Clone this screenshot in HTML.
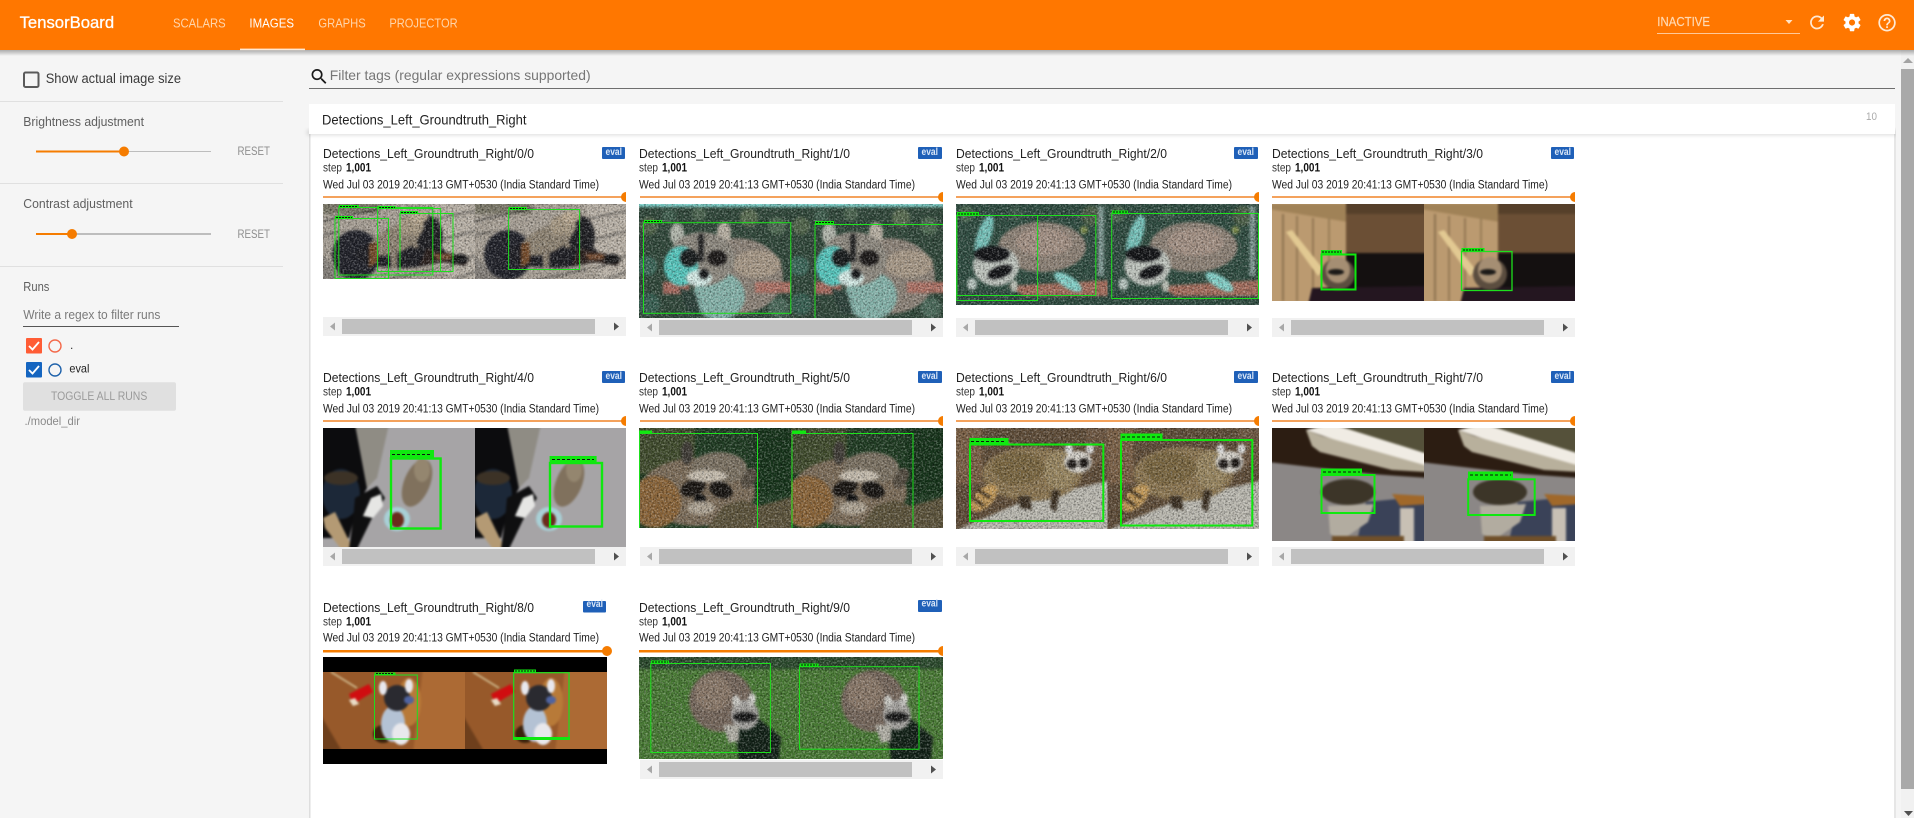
<!DOCTYPE html>
<html><head><meta charset="utf-8"><title>TensorBoard</title>
<style>
html,body{margin:0;padding:0;background:#f5f5f5;overflow:hidden}
svg{display:block}
text{font-family:"Liberation Sans",sans-serif;white-space:pre}
.nav{font-size:13px;fill:#ffd5ab}
.t{font-size:13px;fill:#212121}
.s{font-size:11.5px;fill:#333}
.sb{font-size:11.5px;fill:#111;font-weight:700}
.d{font-size:11.5px;fill:#212121}
.e{font-size:10.5px;fill:#d9e6f7;font-weight:700}
.g{font-size:12.5px;fill:#5f5f5f}
.r{font-size:12px;fill:#8e8e8e}
.bx{fill:none;stroke:#1de01d;stroke-width:1}
.bt{fill:none;stroke:#0fe80f;stroke-width:2}
.lb{fill:#10e810}
.ld{stroke:#111;stroke-width:1;stroke-dasharray:2 1}
</style></head>
<body>
<svg xmlns="http://www.w3.org/2000/svg" width="1914" height="818" viewBox="0 0 1914 818">
<defs>
<filter id="b" x="-5%" y="-5%" width="110%" height="110%" color-interpolation-filters="sRGB"><feGaussianBlur stdDeviation="1"/></filter>
<filter id="f" x="-5%" y="-5%" width="110%" height="110%" color-interpolation-filters="sRGB">
<feGaussianBlur stdDeviation="1.2" result="a"/>
<feTurbulence type="fractalNoise" baseFrequency=".55" numOctaves="2" seed="4" result="n"/>
<feColorMatrix in="n" values="0 0 0 0 0 0 0 0 0 0 0 0 0 0 0 1.1 0 0 0 -.46" result="dk"/>
<feColorMatrix in="n" values="0 0 0 0 1 0 0 0 0 1 0 0 0 0 1 0 .9 0 0 -.4" result="lt"/>
<feMerge><feMergeNode in="a"/><feMergeNode in="dk"/><feMergeNode in="lt"/></feMerge>
</filter>
<filter id="sh" x="-5%" y="-50%" width="110%" height="250%"><feGaussianBlur stdDeviation="2"/></filter>
<linearGradient id="hs" x1="0" y1="0" x2="0" y2="1"><stop offset="0" stop-color="#000" stop-opacity=".3"/><stop offset="1" stop-color="#000" stop-opacity="0"/></linearGradient>

<g id="sl"><rect x="0" y="-.75" width="303" height="1.5" fill="#f08326"/><path d="M303-5A5 5 0 0 0 303 5Z" fill="#f57c00"/></g>
<g id="sc"><rect width="303" height="19" fill="#f1f1f1"/><rect x="19" y="2" width="253" height="15" fill="#c1c1c1"/><path d="M7 9.5L12 5.5V13.5Z" fill="#a8a8a8"/><path d="M291 5.5L296 9.5L291 13.5Z" fill="#505050"/></g>

<g id="p0" filter="url(#f)">
<rect x="-4" y="-4" width="160" height="84" fill="#aaa297"/>
<rect x="-4" y="-4" width="60" height="14" fill="#7b7868"/>
<path d="M110 0H156V80H125Z" fill="#bcb4a9"/>
<path d="M-4 48L28 80H-4Z" fill="#85807a"/>
<ellipse cx="33" cy="51" rx="24" ry="25" fill="#1f2028"/>
<ellipse cx="78" cy="50" rx="45" ry="14" fill="#1c1c22"/>
<ellipse cx="106" cy="33" rx="14" ry="21" fill="#1c1c20"/>
<path d="M104 44L132 50L146 56L142 62L120 58L96 62Z" fill="#2a1f1c"/>
<path d="M110 50L128 50L130 55L114 56Z" fill="#7a5034"/>
<ellipse cx="137" cy="55" rx="8" ry="5" fill="#141416"/>
<ellipse cx="72" cy="36" rx="27" ry="13" transform="rotate(-22 72 36)" fill="#8f8473"/>
<ellipse cx="88" cy="22" rx="13" ry="11" fill="#a89a84"/>
<ellipse cx="96" cy="13" rx="9" ry="6" fill="#bcab92"/>
<path d="M67 44L75 44L74 64L68 64ZM84 30L92 30L96 44L90 44Z" fill="#8a7f6f"/>
<path d="M46 40L54 38L55 58L46 64Z" fill="#754a28"/>
<path d="M-4 18L60 4M-4 32L16 28M108 16L156 6M118 36L156 26M122 64L156 50M62 76L112 65M130 76L156 66" stroke="#2a2a2a" stroke-width="1" fill="none"/>
</g>

<g id="p1" filter="url(#f)">
<rect x="-4" y="-4" width="160" height="122" fill="#2e4638"/>
<rect x="-4" y="-4" width="160" height="7" fill="#7fd6cf"/>
<circle cx="10" cy="22" r="9" fill="#50654a"/><circle cx="30" cy="12" r="7" fill="#3f5f4e"/><circle cx="110" cy="14" r="9" fill="#5a6e52"/><circle cx="138" cy="22" r="9" fill="#4e6a52"/><circle cx="60" cy="10" r="7" fill="#4c6650"/><circle cx="8" cy="62" r="10" fill="#3a6658"/><circle cx="10" cy="100" r="11" fill="#355e50"/><circle cx="140" cy="104" r="10" fill="#4a6a5a"/>
<ellipse cx="98" cy="72" rx="46" ry="38" fill="#8d8378"/>
<ellipse cx="118" cy="60" rx="24" ry="14" fill="#a99a88"/>
<ellipse cx="80" cy="92" rx="26" ry="24" fill="#86b5ac"/>
<rect x="24" y="78" width="26" height="12" fill="#a96a5e"/>
<rect x="116" y="78" width="38" height="11" fill="#b07265"/>
<ellipse cx="38" cy="30" rx="7" ry="11" fill="#b4b9ae"/><ellipse cx="85" cy="29" rx="7" ry="11" fill="#bcb4a6"/>
<ellipse cx="63" cy="55" rx="33" ry="27" fill="#8f8a80"/>
<ellipse cx="42" cy="62" rx="17" ry="20" fill="#56c8bf"/>
<ellipse cx="50" cy="54" rx="9" ry="9" fill="#15191a"/><ellipse cx="78" cy="54" rx="10" ry="8" fill="#1a1716"/>
<rect x="59" y="30" width="6" height="28" fill="#222"/>
<ellipse cx="60" cy="74" rx="13" ry="8" fill="#d8efea"/>
<ellipse cx="65" cy="70" rx="5" ry="5" fill="#101214"/>
<path d="M40 84L50 110H62L56 88Z" fill="#2a4038"/>
</g>

<g id="p2" filter="url(#f)">
<rect x="-4" y="-4" width="160" height="109" fill="#2c4a3e"/>
<circle cx="10" cy="10" r="8" fill="#4a6650"/><circle cx="135" cy="12" r="10" fill="#4a5e46"/><circle cx="118" cy="35" r="7" fill="#b2ae3e"/><circle cx="128" cy="26" r="4" fill="#7a8a4a"/><circle cx="60" cy="10" r="7" fill="#3c5a4a"/>
<rect x="142" y="2" width="6" height="70" fill="#7f9a94"/>
<path d="M52 82L156 76V92L68 92Z" fill="#a56d5c"/>
<ellipse cx="86" cy="43" rx="44" ry="25" fill="#8e8276"/>
<ellipse cx="88" cy="38" rx="28" ry="14" fill="#a59285"/>
<ellipse cx="28" cy="32" rx="7" ry="22" transform="rotate(18 28 32)" fill="#76c4bc"/>
<ellipse cx="112" cy="78" rx="16" ry="6" transform="rotate(32 112 78)" fill="#84d2ca"/>
<ellipse cx="40" cy="62" rx="23" ry="20" fill="#c0c6bf"/>
<ellipse cx="36" cy="50" rx="18" ry="8" fill="#111215"/>
<ellipse cx="44" cy="68" rx="13" ry="6" transform="rotate(-20 44 68)" fill="#101114"/>
<ellipse cx="16" cy="80" rx="5" ry="6" fill="#b8c6c0"/><ellipse cx="58" cy="82" rx="4" ry="6" fill="#b8bdb2"/>
</g>

<g id="p3" filter="url(#b)">
<rect x="-4" y="-4" width="160" height="105" fill="#bb9a70"/>
<path d="M-4 0H76V18L-4 5Z" fill="#a08257"/>
<rect x="10" y="10" width="2" height="87" fill="#8e7350"/><rect x="24" y="12" width="2" height="85" fill="#967a56"/><rect x="40" y="14" width="2" height="84" fill="#957954"/><rect x="56" y="14" width="2" height="84" fill="#9a7f58"/>
<rect x="74" y="-4" width="82" height="56" fill="#6b4f35"/>
<rect x="74" y="-4" width="82" height="14" fill="#56402a"/>
<rect x="74" y="49" width="82" height="52" fill="#141010"/>
<path d="M14 28L20 26L52 66L46 72Z" fill="#e2c992"/>
<path d="M40 84L156 82V101H36Z" fill="#241620"/>
<ellipse cx="66" cy="70" rx="17" ry="16" fill="#5b4d3f"/>
<ellipse cx="66" cy="66" rx="12" ry="13" fill="#a58e73"/><ellipse cx="64" cy="68" rx="8" ry="3" fill="#1c1a18"/>
</g>

<g id="p4" filter="url(#b)">
<rect x="-4" y="-4" width="160" height="127" fill="#a6a4a6"/>
<path d="M-4-4H32L44 60L34 78L26 110H-4Z" fill="#0c0c0e"/>
<path d="M32-4H66L54 50L44 60Z" fill="#8f8c84"/>
<ellipse cx="18" cy="66" rx="19" ry="25" fill="#1c2838"/>
<ellipse cx="18" cy="50" rx="17" ry="7" fill="#3c3226"/>
<path d="M0 90L12 84L30 121H18L2 100Z" fill="#b49a74"/>
<path d="M32 70L54 58L62 70L48 92L34 121H26L30 92Z" fill="#0f0f10"/>
<path d="M48 70L58 66L60 78L50 90L40 88Z" fill="#e6e6e4"/>
<ellipse cx="94" cy="55" rx="13" ry="25" transform="rotate(22 94 55)" fill="#80715d"/>
<ellipse cx="99" cy="42" rx="8" ry="12" fill="#94866f"/>
<ellipse cx="74" cy="91" rx="13" ry="12" fill="#a8d0d6"/><ellipse cx="74" cy="92" rx="7" ry="8" fill="#6a2c1c"/>
</g>

<g id="p5" filter="url(#f)">
<rect x="-4" y="-4" width="160" height="108" fill="#1d3a20"/>
<rect x="-4" y="-4" width="60" height="50" fill="#3e4a2a"/>
<rect x="115" y="-4" width="41" height="70" fill="#143218"/>
<ellipse cx="58" cy="64" rx="58" ry="34" fill="#7c6c58"/>
<ellipse cx="16" cy="74" rx="26" ry="26" fill="#8b6437"/>
<ellipse cx="48" cy="25" rx="6" ry="12" fill="#3e3a34"/>
<ellipse cx="110" cy="50" rx="7" ry="11" transform="rotate(30 110 50)" fill="#544c40"/>
<ellipse cx="80" cy="40" rx="28" ry="16" fill="#7c7262"/>
<ellipse cx="54" cy="60" rx="13" ry="8" fill="#17130f" transform="rotate(-20 54 60)"/>
<ellipse cx="82" cy="62" rx="12" ry="8" fill="#15120f" transform="rotate(20 82 62)"/>
<ellipse cx="68" cy="48" rx="20" ry="6" fill="#c8bfb0"/>
<ellipse cx="61" cy="71" rx="6" ry="5" fill="#0d0d0d"/>
<ellipse cx="62" cy="80" rx="14" ry="7" fill="#b0a594"/>
<path d="M66 104L84 78L104 72L120 78L156 68V104Z" fill="#5c533a"/>
</g>

<g id="p6" filter="url(#f)">
<rect x="-4" y="-4" width="160" height="109" fill="#5e4b36"/>
<rect x="-4" y="-4" width="30" height="60" fill="#7a5f44"/><rect x="130" y="-4" width="26" height="42" fill="#6d5640"/>
<path d="M-4 104L70 72L156 52V105H-4Z" fill="#bdbbb2"/>
<ellipse cx="76" cy="46" rx="50" ry="27" fill="#8c7650"/>
<ellipse cx="62" cy="40" rx="26" ry="16" fill="#7a663f"/>
<ellipse cx="104" cy="42" rx="16" ry="20" fill="#9a8760"/>
<ellipse cx="28" cy="70" rx="17" ry="9" transform="rotate(-45 28 70)" fill="#c49a58"/>
<path d="M22 62L34 70M17 70L28 78" stroke="#3a2c1a" stroke-width="3"/>
<ellipse cx="122" cy="34" rx="14" ry="11" fill="#d8d4cc"/>
<ellipse cx="116" cy="36" rx="5" ry="5" fill="#17120f"/><ellipse cx="128" cy="35" rx="5" ry="5" fill="#17120f"/>
<ellipse cx="113" cy="21" rx="4" ry="5" fill="#ddd"/><ellipse cx="134" cy="21" rx="4" ry="5" fill="#ddd"/>
<path d="M62 68L74 68L76 82L64 80ZM96 62L104 62L100 84L94 80Z" fill="#3a2e20"/>
</g>

<g id="p7" filter="url(#b)">
<rect x="-4" y="-4" width="160" height="121" fill="#8b8786"/>
<path d="M-4-4H156V50L100 46L-4 34Z" fill="#2c1d12"/>
<path d="M34-4H156V40Z" fill="#55513a"/>
<path d="M60-4L156 26V44L34 2Z" fill="#f0ece4"/>
<path d="M34 2L40 18L48 24L120 42L156 44V38L50 8Z" fill="#b8b09c"/>
<ellipse cx="76" cy="64" rx="27" ry="13" fill="#3c3528"/>
<path d="M94 74L156 68V117H84Z" fill="#3a4258"/>
<path d="M120 66L156 68V76L128 78Z" fill="#a0682a"/>
<rect x="128" y="80" width="14" height="35" fill="#c8c0b4"/>
<path d="M56 78L102 76L96 94L70 112L58 106Z" fill="#b2aca0"/>
<rect x="60" y="108" width="72" height="9" fill="#70502a"/>
</g>

<g id="p8" filter="url(#b)">
<rect x="-4" y="-4" width="150" height="85" fill="#97592a"/>
<path d="M100-4H146V81H90Z" fill="#ac6a34"/><path d="M-4 40L20 81H-4Z" fill="#6e3f1c"/>
<ellipse cx="86" cy="30" rx="12" ry="24" fill="#b87a38"/>
<path d="M8 0L34 16" stroke="#d8c69a" stroke-width="1.5"/>
<path d="M26 22L46 12L50 20L30 32Z" fill="#d00d10"/><path d="M26 28L30 34L36 32L32 26Z" fill="#e9dcc6"/>
<ellipse cx="60" cy="62" rx="10" ry="9" fill="#3a220c"/>
<ellipse cx="70" cy="52" rx="12" ry="18" fill="#b4c2d4"/><ellipse cx="78" cy="62" rx="9" ry="11" fill="#e8e8ec"/>
<ellipse cx="74" cy="26" rx="13" ry="13" fill="#2a2a30"/>
<ellipse cx="60" cy="16" rx="4" ry="7" fill="#e8e8ee"/><ellipse cx="86" cy="14" rx="4" ry="7" fill="#e8e8ee"/>
<ellipse cx="86" cy="28" rx="5" ry="4" fill="#5064a0"/>
</g>

<g id="p9" filter="url(#f)">
<rect x="-4" y="-4" width="164" height="110" fill="#477a32"/>
<rect x="-4" y="-4" width="164" height="16" fill="#28482a"/>
<path d="M96 72L118 60L142 80L140 104H100Z" fill="#0f1f14"/>
<ellipse cx="82" cy="44" rx="32" ry="31" fill="#75665a"/>
<ellipse cx="74" cy="36" rx="18" ry="18" fill="#8a7868"/>
<ellipse cx="106" cy="58" rx="14" ry="15" fill="#a6a4a0"/>
<ellipse cx="106" cy="60" rx="12" ry="5" fill="#141414"/>
<ellipse cx="97" cy="44" rx="4" ry="6" fill="#cfcfc9"/><ellipse cx="113" cy="42" rx="4" ry="6" fill="#cfcfc9"/>
<path d="M84 68L100 68L100 84L90 86Z" fill="#b4b2a8"/>
</g>
</defs>

<!-- page -->
<rect width="1914" height="818" fill="#f5f5f5"/>

<!-- cards pane -->
<rect x="309" y="134" width="1587" height="684" fill="#fff"/>
<rect x="309" y="104" width="1.5" height="714" fill="#dedede"/>
<rect x="1894" y="134" width="2" height="684" fill="#e6e6e6"/>
<rect x="307" y="130" width="1590" height="5" fill="#000" opacity=".14" filter="url(#sh)"/>
<rect x="309" y="104" width="1586" height="30" fill="#fff"/>
<text x="322" y="124.5" font-size="14" fill="#212121" textLength="204.5" lengthAdjust="spacingAndGlyphs">Detections_Left_Groundtruth_Right</text>
<text x="1866" y="120" font-size="11" fill="#aaa" textLength="11" lengthAdjust="spacingAndGlyphs">10</text>

<!-- scrollbar -->
<rect x="1896" y="50" width="5" height="768" fill="#f5f5f5"/>
<rect x="1901" y="50" width="13" height="768" fill="#f1f1f1"/>
<rect x="1901" y="69" width="13" height="720" fill="#a9a9a9"/>
<path d="M1908 58L1913 63H1903Z" fill="#a3a3a3"/>
<path d="M1904 811H1913L1908.5 816Z" fill="#505050"/>

<!-- header -->
<rect y="50" width="1914" height="6" fill="url(#hs)"/>
<rect width="1914" height="50" fill="#ff7700"/>
<text x="19.6" y="28" font-size="17" fill="#fff" stroke="#fff" stroke-width=".3" textLength="94.5" lengthAdjust="spacingAndGlyphs">TensorBoard</text>
<text class="nav" x="173" y="27.5" textLength="52.7" lengthAdjust="spacingAndGlyphs">SCALARS</text>
<text class="nav" x="249.4" y="27.5" style="fill:#fff" textLength="44.6" lengthAdjust="spacingAndGlyphs">IMAGES</text>
<text class="nav" x="318.4" y="27.5" textLength="47.3" lengthAdjust="spacingAndGlyphs">GRAPHS</text>
<text class="nav" x="389.4" y="27.5" textLength="68.2" lengthAdjust="spacingAndGlyphs">PROJECTOR</text>
<rect x="240" y="48.6" width="65" height="1.6" fill="#ffe9d4"/>
<text x="1657.3" y="26" font-size="12.5" fill="#ffd9b3" stroke="#ffd9b3" stroke-width=".2" textLength="52.7" lengthAdjust="spacingAndGlyphs">INACTIVE</text>
<rect x="1657" y="33" width="143" height="1" fill="#ffc999"/>
<path d="M1785.5 20H1792.5L1789 24Z" fill="#ffe3c7"/>
<path transform="translate(1806.6 12) scale(.87)" fill="#ffe9d4" d="M17.65 6.35C16.2 4.9 14.21 4 12 4c-4.42 0-7.99 3.58-7.99 8s3.57 8 7.99 8c3.73 0 6.84-2.55 7.73-6h-2.08c-.82 2.33-3.04 4-5.65 4-3.31 0-6-2.69-6-6s2.69-6 6-6c1.66 0 3.14.69 4.22 1.78L13 11h7V4l-2.35 2.35z"/>
<path transform="translate(1841.6 12.1) scale(.87)" fill="#fff" d="M19.43 12.98c.04-.32.07-.64.07-.98s-.03-.66-.07-.98l2.11-1.65c.19-.15.24-.42.12-.64l-2-3.46c-.12-.22-.39-.3-.61-.22l-2.49 1c-.52-.4-1.08-.73-1.69-.98l-.38-2.65C14.46 2.18 14.25 2 14 2h-4c-.25 0-.46.18-.49.42l-.38 2.65c-.61.25-1.17.59-1.69.98l-2.49-1c-.23-.09-.49 0-.61.22l-2 3.46c-.13.22-.07.49.12.64l2.11 1.65c-.04.32-.07.65-.07.98s.03.66.07.98l-2.11 1.65c-.19.15-.24.42-.12.64l2 3.46c.12.22.39.3.61.22l2.49-1c.52.4 1.08.73 1.69.98l.38 2.65c.03.24.24.42.49.42h4c.25 0 .46-.18.49-.42l.38-2.65c.61-.25 1.17-.59 1.69-.98l2.49 1c.23.09.49 0 .61-.22l2-3.46c.12-.22.07-.49-.12-.64l-2.11-1.65zM12 15.5c-1.93 0-3.5-1.57-3.5-3.5s1.57-3.5 3.5-3.5 3.5 1.57 3.5 3.5-1.57 3.5-3.5 3.5z"/>
<path transform="translate(1876.6 12.3) scale(.87)" fill="#ffe9d4" d="M11 18h2v-2h-2v2zm1-16C6.48 2 2 6.48 2 12s4.48 10 10 10 10-4.48 10-10S17.52 2 12 2zm0 18c-4.41 0-8-3.59-8-8s3.59-8 8-8 8 3.59 8 8-3.59 8-8 8zm0-14c-2.21 0-4 1.79-4 4h2c0-1.1.9-2 2-2s2 .9 2 2c0 2-3 1.75-3 5h2c0-2.25 3-2.5 3-5 0-2.21-1.79-4-4-4z"/>

<!-- filter -->
<path transform="translate(309 66.5) scale(.85)" fill="#1a1a1a" d="M15.5 14h-.79l-.28-.27C15.41 12.59 16 11.11 16 9.5 16 5.91 13.09 3 9.5 3S3 5.91 3 9.5 5.91 16 9.5 16c1.61 0 3.09-.59 4.23-1.57l.27.28v.79l5 4.99L20.49 19l-4.99-5zm-6 0C7.01 14 5 11.99 5 9.5S7.01 5 9.5 5 14 7.01 14 9.5 11.99 14 9.5 14z"/>
<text x="329.8" y="80" font-size="14" fill="#767676" textLength="260.8" lengthAdjust="spacingAndGlyphs">Filter tags (regular expressions supported)</text>
<rect x="309" y="88" width="1586" height="1" fill="#6e6e6e"/>

<!-- sidebar -->
<rect x="24" y="72.5" width="14.5" height="14.5" rx="1.5" fill="none" stroke="#5a5a5a" stroke-width="2"/>
<text x="45.7" y="83.2" font-size="13.5" fill="#3a3a3a" textLength="135.3" lengthAdjust="spacingAndGlyphs">Show actual image size</text>
<rect y="101" width="283" height="1" fill="#e0e0e0"/>
<text class="g" x="23.3" y="126" textLength="120.7" lengthAdjust="spacingAndGlyphs">Brightness adjustment</text>
<rect x="36" y="151" width="175" height="1" fill="#bdbdbd"/>
<rect x="36" y="150.5" width="88" height="2" fill="#f57c00"/>
<circle cx="124" cy="151.5" r="5" fill="#f57c00"/>
<text class="r" x="237.5" y="155" textLength="32.5" lengthAdjust="spacingAndGlyphs">RESET</text>
<rect y="183" width="283" height="1" fill="#e0e0e0"/>
<text class="g" x="23.3" y="208.2" textLength="109.3" lengthAdjust="spacingAndGlyphs">Contrast adjustment</text>
<rect x="36" y="233" width="175" height="2" fill="#bdbdbd"/>
<rect x="36" y="233" width="36" height="2" fill="#f57c00"/>
<circle cx="72" cy="234" r="5" fill="#f57c00"/>
<text class="r" x="237.5" y="238" textLength="32.5" lengthAdjust="spacingAndGlyphs">RESET</text>
<rect y="266" width="283" height="1" fill="#e0e0e0"/>
<text class="g" x="23.3" y="291" textLength="26.1" lengthAdjust="spacingAndGlyphs">Runs</text>
<text x="23.3" y="319" font-size="12.5" fill="#7a7a7a" textLength="137.1" lengthAdjust="spacingAndGlyphs">Write a regex to filter runs</text>
<rect x="23" y="326" width="156" height="1" fill="#555"/>
<rect x="26" y="338" width="16" height="15.5" rx="1" fill="#ff5c35"/>
<path d="M29 346L32.5 349.5L39 342" fill="none" stroke="#fff" stroke-width="1.8"/>
<circle cx="55" cy="346" r="6" fill="none" stroke="#f4694a" stroke-width="1.4"/>
<text x="70" y="349" font-size="12" fill="#333">.</text>
<rect x="26" y="362" width="16" height="15.5" rx="1" fill="#1565c0"/>
<path d="M29 370L32.5 373.5L39 366" fill="none" stroke="#fff" stroke-width="1.8"/>
<circle cx="55" cy="370" r="6" fill="none" stroke="#1f62ab" stroke-width="1.4"/>
<text x="69.4" y="372.5" font-size="12" fill="#222" textLength="20" lengthAdjust="spacingAndGlyphs">eval</text>
<rect x="23" y="382.3" width="153" height="28.4" rx="2" fill="#e0e0e0"/>
<text x="51" y="400" font-size="12" fill="#9a9a9a" textLength="96.3" lengthAdjust="spacingAndGlyphs">TOGGLE ALL RUNS</text>
<text x="24.5" y="425" font-size="12" fill="#8a8a8a" textLength="55.5" lengthAdjust="spacingAndGlyphs">./model_dir</text>

<!-- ROW 1 -->
<!-- card 0 -->
<text class="t" x="323" y="158" textLength="211" lengthAdjust="spacingAndGlyphs">Detections_Left_Groundtruth_Right/0/0</text>
<text class="s" x="323" y="171.3" textLength="19" lengthAdjust="spacingAndGlyphs">step</text><text class="sb" x="346" y="171.3" textLength="25" lengthAdjust="spacingAndGlyphs">1,001</text>
<text class="d" x="323" y="188.5" textLength="276" lengthAdjust="spacingAndGlyphs">Wed Jul 03 2019 20:41:13 GMT+0530 (India Standard Time)</text>
<rect x="602" y="147" width="23" height="12" rx="1" fill="#1f60b8"/><text class="e" x="605.5" y="155" textLength="16.5" lengthAdjust="spacingAndGlyphs">eval</text>
<use href="#sl" x="323" y="197"/>
<svg x="323" y="204" width="152" height="75"><use href="#p0"/></svg>
<svg x="475" y="204" width="151" height="75"><use href="#p0"/></svg>
<rect class="bx" x="335" y="218.5" width="53.5" height="60"/><rect class="bx" x="338.8" y="207.5" width="94" height="67.5"/><rect class="bx" x="377.6" y="208.5" width="63" height="63"/><rect class="bx" x="400" y="213.5" width="53" height="58"/><rect class="bx" x="508.6" y="209.5" width="71" height="60"/>
<rect class="lb" x="335" y="216" width="18" height="3"/><rect class="lb" x="338.8" y="205" width="20" height="3"/><rect class="lb" x="377.6" y="206" width="18" height="3"/><rect class="lb" x="400" y="211" width="18" height="3"/><rect class="lb" x="508.6" y="207" width="18" height="3"/>
<path class="ld" d="M336 217.5H352M340 206.5H358M379 207.5H395M401 212.5H417M510 208.5H526"/>
<use href="#sc" x="323" y="317"/>

<!-- card 1 -->
<text class="t" x="639" y="158" textLength="211" lengthAdjust="spacingAndGlyphs">Detections_Left_Groundtruth_Right/1/0</text>
<text class="s" x="639" y="171.3" textLength="19" lengthAdjust="spacingAndGlyphs">step</text><text class="sb" x="662" y="171.3" textLength="25" lengthAdjust="spacingAndGlyphs">1,001</text>
<text class="d" x="639" y="188.5" textLength="276" lengthAdjust="spacingAndGlyphs">Wed Jul 03 2019 20:41:13 GMT+0530 (India Standard Time)</text>
<rect x="918" y="147" width="24" height="12" rx="1" fill="#1f60b8"/><text class="e" x="921.5" y="155" textLength="16.5" lengthAdjust="spacingAndGlyphs">eval</text>
<use href="#sl" x="640" y="197"/>
<svg x="639" y="204" width="152" height="114"><use href="#p1"/></svg>
<svg x="791" y="204" width="152" height="114"><use href="#p1"/></svg>
<rect class="bx" x="643.5" y="222.7" width="147.3" height="90.6"/><path class="bx" d="M815 318V224.5H943"/>
<rect class="lb" x="644" y="220" width="18" height="3"/><rect class="lb" x="815" y="221" width="19" height="3"/>
<path class="ld" d="M645 221.5H661M816 222.5H833"/>
<use href="#sc" x="640" y="318"/>

<!-- card 2 -->
<text class="t" x="956" y="158" textLength="211" lengthAdjust="spacingAndGlyphs">Detections_Left_Groundtruth_Right/2/0</text>
<text class="s" x="956" y="171.3" textLength="19" lengthAdjust="spacingAndGlyphs">step</text><text class="sb" x="979" y="171.3" textLength="25" lengthAdjust="spacingAndGlyphs">1,001</text>
<text class="d" x="956" y="188.5" textLength="276" lengthAdjust="spacingAndGlyphs">Wed Jul 03 2019 20:41:13 GMT+0530 (India Standard Time)</text>
<rect x="1234" y="147" width="24" height="12" rx="1" fill="#1f60b8"/><text class="e" x="1237.5" y="155" textLength="16.5" lengthAdjust="spacingAndGlyphs">eval</text>
<use href="#sl" x="956" y="197"/>
<svg x="956" y="204" width="152" height="101"><use href="#p2"/></svg>
<svg x="1107.5" y="204" width="151.5" height="101"><use href="#p2"/></svg>
<rect class="bx" x="956.8" y="215.5" width="80.8" height="85"/><rect class="bx" x="956.8" y="215.5" width="139" height="80"/><rect class="bx" x="1111.7" y="213.5" width="146.8" height="85"/>
<rect class="lb" x="957" y="212" width="22" height="3.5"/><rect class="lb" x="1112" y="210.5" width="16" height="3.5"/>
<path class="ld" d="M958 214H978M1113 212H1127"/>
<use href="#sc" x="956" y="318"/>

<!-- card 3 -->
<text class="t" x="1272" y="158" textLength="211" lengthAdjust="spacingAndGlyphs">Detections_Left_Groundtruth_Right/3/0</text>
<text class="s" x="1272" y="171.3" textLength="19" lengthAdjust="spacingAndGlyphs">step</text><text class="sb" x="1295" y="171.3" textLength="25" lengthAdjust="spacingAndGlyphs">1,001</text>
<text class="d" x="1272" y="188.5" textLength="276" lengthAdjust="spacingAndGlyphs">Wed Jul 03 2019 20:41:13 GMT+0530 (India Standard Time)</text>
<rect x="1551" y="147" width="23" height="12" rx="1" fill="#1f60b8"/><text class="e" x="1554.5" y="155" textLength="16.5" lengthAdjust="spacingAndGlyphs">eval</text>
<use href="#sl" x="1272" y="197"/>
<svg x="1272" y="204" width="152" height="97"><use href="#p3"/></svg>
<svg x="1424" y="204" width="151" height="97"><use href="#p3"/></svg>
<rect class="bt" x="1321.5" y="254.5" width="34" height="35"/><rect class="bx" style="stroke-width:1.3" x="1461.5" y="251.5" width="50.5" height="39"/>
<rect class="lb" x="1321" y="250" width="21" height="4"/><rect class="lb" x="1461.5" y="248" width="23" height="3.5"/>
<path class="ld" d="M1322 252H1341M1463 250H1483"/>
<use href="#sc" x="1272" y="318"/>

<!-- ROW 2 -->
<!-- card 4 -->
<text class="t" x="323" y="382" textLength="211" lengthAdjust="spacingAndGlyphs">Detections_Left_Groundtruth_Right/4/0</text>
<text class="s" x="323" y="395.3" textLength="19" lengthAdjust="spacingAndGlyphs">step</text><text class="sb" x="346" y="395.3" textLength="25" lengthAdjust="spacingAndGlyphs">1,001</text>
<text class="d" x="323" y="412.5" textLength="276" lengthAdjust="spacingAndGlyphs">Wed Jul 03 2019 20:41:13 GMT+0530 (India Standard Time)</text>
<rect x="602" y="371" width="23" height="12" rx="1" fill="#1f60b8"/><text class="e" x="605.5" y="379" textLength="16.5" lengthAdjust="spacingAndGlyphs">eval</text>
<use href="#sl" x="323" y="421"/>
<svg x="323" y="428" width="152" height="119"><use href="#p4"/></svg>
<svg x="475" y="428" width="151" height="119"><use href="#p4"/></svg>
<rect class="bt" style="stroke-width:2.4" x="391" y="458.5" width="49.6" height="70"/><rect class="bt" style="stroke-width:2.4" x="550" y="463" width="52" height="63.5"/>
<rect class="lb" x="390" y="450" width="44" height="8.5"/><rect class="lb" x="549.6" y="456" width="47" height="7"/>
<path class="ld" d="M392 454.5H431M552 459.5H594" style="stroke-dasharray:3 2"/>
<use href="#sc" x="323" y="547" />

<!-- card 5 -->
<text class="t" x="639" y="382" textLength="211" lengthAdjust="spacingAndGlyphs">Detections_Left_Groundtruth_Right/5/0</text>
<text class="s" x="639" y="395.3" textLength="19" lengthAdjust="spacingAndGlyphs">step</text><text class="sb" x="662" y="395.3" textLength="25" lengthAdjust="spacingAndGlyphs">1,001</text>
<text class="d" x="639" y="412.5" textLength="276" lengthAdjust="spacingAndGlyphs">Wed Jul 03 2019 20:41:13 GMT+0530 (India Standard Time)</text>
<rect x="918" y="371" width="24" height="12" rx="1" fill="#1f60b8"/><text class="e" x="921.5" y="379" textLength="16.5" lengthAdjust="spacingAndGlyphs">eval</text>
<use href="#sl" x="640" y="421"/>
<svg x="639" y="428" width="152" height="100"><use href="#p5"/></svg>
<svg x="791" y="428" width="152" height="100"><use href="#p5"/></svg>
<path class="bx" d="M639.5 528V433.5H757.5V528M792 528V433.5H913V528"/>
<rect class="lb" x="639" y="430.5" width="13" height="3"/><rect class="lb" x="792" y="430.5" width="14" height="3"/>
<use href="#sc" x="640" y="547"/>

<!-- card 6 -->
<text class="t" x="956" y="382" textLength="211" lengthAdjust="spacingAndGlyphs">Detections_Left_Groundtruth_Right/6/0</text>
<text class="s" x="956" y="395.3" textLength="19" lengthAdjust="spacingAndGlyphs">step</text><text class="sb" x="979" y="395.3" textLength="25" lengthAdjust="spacingAndGlyphs">1,001</text>
<text class="d" x="956" y="412.5" textLength="276" lengthAdjust="spacingAndGlyphs">Wed Jul 03 2019 20:41:13 GMT+0530 (India Standard Time)</text>
<rect x="1234" y="371" width="24" height="12" rx="1" fill="#1f60b8"/><text class="e" x="1237.5" y="379" textLength="16.5" lengthAdjust="spacingAndGlyphs">eval</text>
<use href="#sl" x="956" y="421"/>
<svg x="956" y="428" width="152" height="101"><use href="#p6"/></svg>
<svg x="1107.5" y="428" width="151.5" height="101"><use href="#p6"/></svg>
<rect class="bt" x="970" y="444.5" width="133.3" height="76.5"/><rect class="bt" x="1121" y="440" width="131.3" height="85.5"/>
<rect class="lb" x="969.5" y="438" width="39" height="6.5"/><rect class="lb" x="1120.5" y="433.5" width="42" height="6.5"/>
<path class="ld" d="M971 441.5H1006M1122 437H1160" style="stroke-dasharray:3 2"/>
<use href="#sc" x="956" y="547"/>

<!-- card 7 -->
<text class="t" x="1272" y="382" textLength="211" lengthAdjust="spacingAndGlyphs">Detections_Left_Groundtruth_Right/7/0</text>
<text class="s" x="1272" y="395.3" textLength="19" lengthAdjust="spacingAndGlyphs">step</text><text class="sb" x="1295" y="395.3" textLength="25" lengthAdjust="spacingAndGlyphs">1,001</text>
<text class="d" x="1272" y="412.5" textLength="276" lengthAdjust="spacingAndGlyphs">Wed Jul 03 2019 20:41:13 GMT+0530 (India Standard Time)</text>
<rect x="1551" y="371" width="23" height="12" rx="1" fill="#1f60b8"/><text class="e" x="1554.5" y="379" textLength="16.5" lengthAdjust="spacingAndGlyphs">eval</text>
<use href="#sl" x="1272" y="421"/>
<svg x="1272" y="428" width="152" height="113"><use href="#p7"/></svg>
<svg x="1424" y="428" width="151" height="113"><use href="#p7"/></svg>
<rect class="bt" x="1321.5" y="475" width="53" height="38"/><rect class="bt" x="1468.2" y="479.3" width="66.5" height="35.7"/>
<rect class="lb" x="1321" y="468.5" width="41" height="6.5"/><rect class="lb" x="1468" y="471.5" width="45" height="7.5"/>
<path class="ld" d="M1323 472H1360M1470 475H1511" style="stroke-dasharray:3 2"/>
<use href="#sc" x="1272" y="547"/>

<!-- ROW 3 -->
<!-- card 8 -->
<text class="t" x="323" y="612" textLength="211" lengthAdjust="spacingAndGlyphs">Detections_Left_Groundtruth_Right/8/0</text>
<text class="s" x="323" y="625.3" textLength="19" lengthAdjust="spacingAndGlyphs">step</text><text class="sb" x="346" y="625.3" textLength="25" lengthAdjust="spacingAndGlyphs">1,001</text>
<text class="d" x="323" y="641.7" textLength="276" lengthAdjust="spacingAndGlyphs">Wed Jul 03 2019 20:41:13 GMT+0530 (India Standard Time)</text>
<rect x="583" y="601" width="23" height="11.5" rx="1" fill="#1f60b8"/><text class="e" x="586.5" y="607" textLength="16.5" lengthAdjust="spacingAndGlyphs">eval</text>
<rect x="323" y="650" width="284" height="2.5" fill="#f57c00"/><circle cx="607" cy="651" r="5" fill="#f57c00"/>
<rect x="323" y="657" width="284" height="107" fill="#000"/>
<svg x="323" y="672" width="142" height="77"><use href="#p8"/></svg>
<svg x="465" y="672" width="142" height="77"><use href="#p8"/></svg>
<rect class="bx" x="374.5" y="675" width="42.8" height="64"/><rect class="bx" style="stroke-width:1.2" x="513.7" y="672.7" width="55.3" height="66"/><rect x="513" y="737" width="57" height="3" fill="#10e810"/>
<rect class="lb" x="374.5" y="672.5" width="21" height="2.5"/><rect class="lb" x="514" y="669.5" width="22" height="3"/>
<path class="ld" d="M376 673.5H394M515 671H535"/>

<!-- card 9 -->
<text class="t" x="639" y="612" textLength="211" lengthAdjust="spacingAndGlyphs">Detections_Left_Groundtruth_Right/9/0</text>
<text class="s" x="639" y="625.3" textLength="19" lengthAdjust="spacingAndGlyphs">step</text><text class="sb" x="662" y="625.3" textLength="25" lengthAdjust="spacingAndGlyphs">1,001</text>
<text class="d" x="639" y="641.7" textLength="276" lengthAdjust="spacingAndGlyphs">Wed Jul 03 2019 20:41:13 GMT+0530 (India Standard Time)</text>
<rect x="918" y="600" width="24" height="12" rx="1" fill="#1f60b8"/><text class="e" x="921.5" y="606.5" textLength="16.5" lengthAdjust="spacingAndGlyphs">eval</text>
<rect x="639" y="650" width="304" height="2.5" fill="#f57c00"/><path d="M943 646A5 5 0 0 0 943 656Z" fill="#f57c00"/>
<svg x="639" y="657" width="157" height="102"><use href="#p9"/></svg>
<svg x="796" y="657" width="147" height="102"><use href="#p9" x="-5"/></svg>
<rect class="bx" x="650.8" y="663.5" width="119.6" height="89"/><rect class="bx" x="799.5" y="666.7" width="119.5" height="82.5"/>
<rect class="lb" x="651" y="660.5" width="18" height="3"/><rect class="lb" x="799.5" y="663.5" width="19" height="3"/>
<path class="ld" d="M652 662H668M801 665H817"/>
<use href="#sc" x="640" y="760"/>
</svg>
</body></html>
